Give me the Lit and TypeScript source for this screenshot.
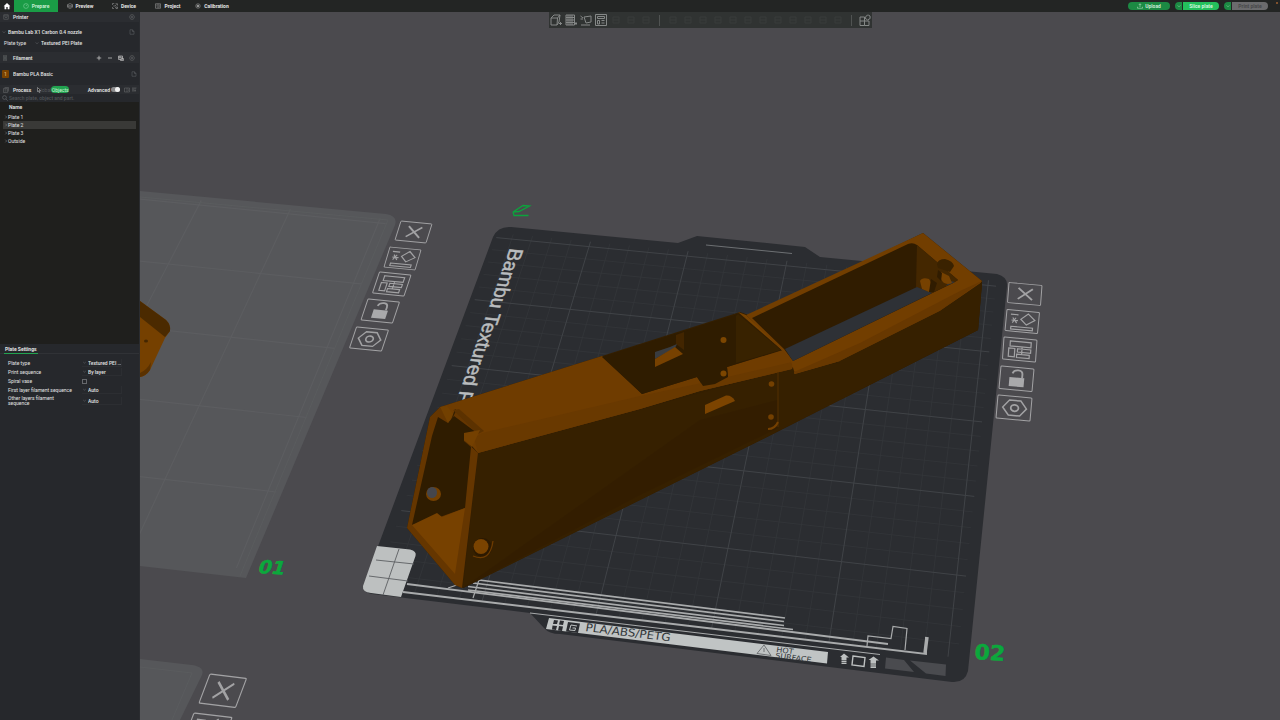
import { LitElement, html, svg, css } from "lit";
import { customElement, property, state } from "lit/decorators.js";

type Pt = [number, number];

/* ---------- plate grid projection ---------- */

const PLATE_MM = 256;

/** Perspective map from bed millimetres (origin bottom left) to the scene. */
function projector(bl: Pt, br: Pt, tr: Pt, tl: Pt) {
  const sx = bl[0] - br[0] + tr[0] - tl[0];
  const sy = bl[1] - br[1] + tr[1] - tl[1];
  const dx1 = br[0] - tr[0], dx2 = tl[0] - tr[0];
  const dy1 = br[1] - tr[1], dy2 = tl[1] - tr[1];
  const den = dx1 * dy2 - dx2 * dy1;
  const g = (sx * dy2 - dx2 * sy) / den;
  const h = (dx1 * sy - sx * dy1) / den;
  const a = br[0] - bl[0] + g * br[0], b = tl[0] - bl[0] + h * tl[0];
  const d = br[1] - bl[1] + g * br[1], e = tl[1] - bl[1] + h * tl[1];
  return (x: number, y: number): Pt => {
    const u = x / PLATE_MM, v = y / PLATE_MM, w = g * u + h * v + 1;
    return [(a * u + b * v + bl[0]) / w, (d * u + e * v + bl[1]) / w];
  };
}

function gridPaths(p: (x: number, y: number) => Pt) {
  let thin = "", bold = "";
  const seg = (a: Pt, b: Pt) =>
    `M${a[0].toFixed(1)} ${a[1].toFixed(1)}L${b[0].toFixed(1)} ${b[1].toFixed(1)}`;
  for (let i = 10; i <= 250; i += 10) {
    const s = seg(p(i, 2), p(i, 254)) + seg(p(2, i), p(254, i));
    if (i % 50 === 0) bold += s;
    else thin += s;
  }
  return { thin, bold };
}

const activeGrid = gridPaths(projector([369, 590], [962, 662], [1001, 279], [495, 230]));
const fadedGrid = gridPaths(projector([-290, 510], [248, 573], [392, 217], [-60, 172]));

/* ---------- plate side buttons ---------- */

const glyphs = {
  close: svg`<path d="M9 4.500L22 15.500M22 4.500L9 15.500" stroke-width="1.700"/>`,
  orient: svg`<path d="M20 2.500L26.500 8L19 13L13.500 8ZM5 15.500H25V18H5ZM4 4H11M6 7L10 12M9 7L6 12M5 9.500H11" stroke-width="1.100"/>`,
  arrange: svg`<path d="M6 3H25V7.500H6ZM5 9.500H10.500V17H5ZM13 9.500H25V12.500H13ZM12.500 14.500H24V17.500H12.500ZM17 7.500V14.500" stroke-width="1.100"/>`,
  lock: svg`<path d="M8.500 9H22V17H8.500Z" fill="#a9a9ab" stroke="none"/><path d="M11 5.500Q12 2.500 16 2.500T20 6V9" stroke-width="1.700"/>`,
  settings: svg`<path d="M10.500 3.500H20.500L26 10L20.500 16.500H10.500L5 10Z" stroke-width="1.300"/><ellipse cx="15.500" cy="10" rx="3.400" ry="2.800" stroke-width="1.500"/>`,
};
type Glyph = keyof typeof glyphs;

function plateButton(kind: Glyph, o: Pt, u: Pt, v: Pt) {
  const m = [u[0] / 30, u[1] / 30, v[0] / 20, v[1] / 20, o[0], o[1]].map((n) => n.toFixed(3));
  return svg`<g transform="matrix(${m.join(" ")})" fill="none" stroke="#a2a2a4" stroke-width="0.9">
    <rect x="0" y="0" width="30" height="20" rx="0.8"/>${glyphs[kind]}</g>`;
}

const plateButtons: [Glyph, Pt, Pt, Pt][] = [
  ["close", [401, 221], [31, 3], [-6, 19]],
  ["orient", [390, 247], [31, 3], [-6, 20]],
  ["arrange", [379.500, 272], [31.500, 3], [-7, 21]],
  ["lock", [368, 299], [31.500, 3], [-7, 21]],
  ["settings", [356.500, 327], [32, 3], [-7, 21]],
  ["close", [1009, 282.500], [33, 3], [-1.500, 20]],
  ["orient", [1007, 309.500], [32.500, 3], [-2, 21]],
  ["arrange", [1004, 337], [33, 3], [-1.500, 22]],
  ["lock", [1001, 366], [33, 3], [-2, 22.500]],
  ["settings", [998, 395], [34, 3], [-2, 23]],
  ["close", [210, 674], [36.500, 4.500], [-11, 29]],
  ["orient", [194, 713], [38, 4.500], [-11, 29]],
];

@customElement("plate-scene")
export class PlateScene extends LitElement {
  static styles = css`
    :host { display: block; min-width: 0; min-height: 0; overflow: hidden; background: #4b4a4e; }
    .view { display: block; width: 100%; height: 100%; }
    .label { font-family: "Liberation Sans", sans-serif; font-size: 20px; fill: #babdbf; stroke: #babdbf; stroke-width: 0.5px; }
    .strip { font-family: "DejaVu Sans", sans-serif; font-size: 12px; fill: #33373a; }
    .warn { font-family: "DejaVu Sans", sans-serif; font-size: 8px; fill: #33373a; }
    .number { font-family: "DejaVu Sans", sans-serif; font-weight: 700; fill: #0ba83c; stroke: #0ba83c; stroke-width: 0.5px; }
    .small { font-size: 19px; }
    .large { font-size: 22px; }
  `;

  render() {
    return html`<svg class="view" viewBox="140 12 1140 708" preserveAspectRatio="xMinYMin slice" role="img" aria-label="Build plates">
      ${this.fadedPlates()} ${this.activePlate()} ${this.model()}
      ${plateButtons.map(([k, o, u, v]) => plateButton(k, o, u, v))}
      <path d="M513 212L523 205.500L529.500 206L519 211.500Z M513 212L514 215.500H528.500" fill="none" stroke="#0ca33d" stroke-width="1.300"/>
      <text class="number small" transform="matrix(1 0.060 -0.300 0.950 257 573)">01</text>
      <text class="number large" transform="matrix(1 0.060 -0.080 0.950 974 659)">02</text>
    </svg>`;
  }

  private fadedPlates() {
    return svg`
      <clipPath id="faded"><path d="M140 191L386 214Q398 216 395 225L246 578L140 566Z"/></clipPath>
      <path d="M140 191L386 214Q398 216 395 225L246 578L140 566Z" fill="#56575a"/>
      <g clip-path="url(#faded)">
        <path d=${fadedGrid.bold} fill="none" stroke="#5c5d60" stroke-width="1.200"/>
        <path d="M140 197L388 220L240 576" fill="none" stroke="#5a5c5e" stroke-width="1"/>
      </g>
      <path d="M140 659L192 665Q205 667 202 675L180 720H140Z" fill="#56575a"/>
      <path d="M140 667L192 673L172 720" fill="none" stroke="#5a5c5e"/>
      <path d="M140 301L166 320Q171 325 170 331L165 338L150 370Q146 376 140 377Z" fill="#754000"/>
      <path d="M140 301L166 320Q171 325 170 331L165 337L140 317Z" fill="#4b2a00"/>
      <ellipse cx="146" cy="341" rx="2" ry="1.500" fill="#442600"/>
      <path d="M151 362L150 370Q146 376 140 377V373Q147 370 151 362Z" fill="#5a3100"/>`;
  }

  private activePlate() {
    const outline =
      "M511 227L678 243L697 236L805 247L820 257L997 274Q1008 277 1007 286L968 671Q965 683 952 682L560 634Q549 634 544 628L530 613L372 594Q361 592 364 584L493 237Q498 226 511 227Z";
    return svg`
      <path d=${outline} fill="#2b2d31"/>
      <path d=${activeGrid.thin} fill="none" stroke="#33363a" stroke-width="0.800"/>
      <path d=${activeGrid.bold} fill="none" stroke="#404347" stroke-width="1"/>
      <path d="M706 245L792 253.500" stroke="#6d7073" stroke-width="1"/>
      <text class="label" transform="matrix(-0.330 0.944 -0.996 -0.090 510 248)">Bambu Textured PEI</text>
      <path d="M377 546L410 549.500Q417 551 415.500 556L401 597L371 593Q362 592 363 586Z" fill="#bdc0c0"/>
      <path d="M399 549L383 595M376 560L414 564M369 576L408 581" stroke="#5c5f62" stroke-width="0.900" fill="none"/>
      <g fill="none" stroke="#a9abac" stroke-width="1.700">
        <path d="M479 580L785 618M473 583L784 621.500M468 586.500L784 625.500M468 590L793 629.500"/>
        <path d="M407 584L888 644M403 592L926 654V637" stroke-width="1.900"/>
        <path d="M448 588L460 584M479 580L473 598" stroke-width="1.200"/>
        <path d="M867 646L868 636L891 638.500L893 626.500L907 628.500L905 650" stroke-width="1.200"/>
        <path d="M925 653L927 637" stroke-width="3.500"/>
        <path d="M530 613L880 654.500" stroke-width="1"/>
      </g>
      <path d="M549 618L828 652L827 663.500L546 629Z" fill="#c0c4c4"/>
      <path d="M554 620L558 620.500L557 624H553ZM560 620.500L564 621L563 625L559 624.500ZM552.500 625.500L557 626L556 630L552 629.500ZM559 626L563 626.500L562 631L558 630.500Z" fill="#2b2d31"/>
      <path d="M568 622L580 623.500L578 633L566 631.500Z" fill="#2b2d31"/>
      <path d="M577 626L571 625L569.500 630L575 630.500L575.500 628H572.500" stroke="#c0c4c4" fill="none"/>
      <text class="strip" transform="matrix(0.993 0.120 -0.150 0.900 585 631)">PLA/ABS/PETG</text>
      <path d="M764 645L757 653.500L771 655.500ZM764 648V652" fill="none" stroke="#5a5d60" stroke-width="0.800"/>
      <text class="warn" transform="matrix(0.993 0.120 -0.150 0.900 776 652)">HOT</text>
      <text class="warn" transform="matrix(0.993 0.120 -0.150 0.900 775 658)">SURFACE</text>
      <path d="M844 653.500L849 657.500H846.500V664H841.500V657H840ZM873.500 656.500L879 660.500H876V668H870.500V660H868.500Z" fill="#bdc0c0"/>
      <path d="M841 660.500H847M841 662.500H847M870 664H877M870 666H877" stroke="#2b2d31" stroke-width="0.600"/>
      <path d="M853 656L865 657.500L864 666.500L852 665Z" fill="none" stroke="#bdc0c0" stroke-width="1.400"/>
      <path d="M886 657.500L904 660L914 672L885 668.500ZM910 660.500L946 664.500L945.500 676L926 673.500Z" fill="#4a4b4f"/>`;
  }

  private model() {
    return svg`
      <path d="M440 407L602 356L740 312L752 316L923 233L982 281L978 330L767 437L660 490L463 588L455 585L407 528L430 417Z" fill="#341f00"/>
      <path d="M478 453L700 393L792 368L840 363L982 284L978 330L767 437L463 588Z" fill="#362000"/>
      <path d="M700 420L778 400V428L640 495L463 588Z" fill="#321d00" opacity="0.600"/>

      <path d="M440 407L602 356L642 394L697 377L703 386L715 384L728 378L727 367L783 350L795 362L792 369L700 391L640 409L478 453L472 446L463 440L464 433L480 432L455 409L450 423Z" fill="#6f3c00"/>
      <path d="M478 453L474 438L482 433L640 396L697 384L792 362V369L700 391L640 409Z" fill="#693900"/>

      <path d="M602 357L738 314L781 350L727 367L728 377L715 384L703 386L697 377L642 394Z" fill="#2f1c00"/>
      <path d="M738 314L781 350L736 363V316Z" fill="#382200"/>
      <path d="M738 312L746 315L796 361L783 351Z" fill="#774200"/>
      <path d="M676 335L684 332V350L676 344Z" fill="#422500"/>
      <path d="M655 352L670 347L677 344L675 348L655 359Z" fill="#393c40"/>
      <path d="M655 359L675 347L683 354L655 367Z" fill="#774100"/>
      <path d="M705 405L726 395.500Q732 395 735 401L705 414Z" fill="#7c4400"/>
      <circle cx="723.500" cy="340" r="3" fill="#7c4600"/>
      <circle cx="723.500" cy="373.500" r="3" fill="#7c4600"/>

      <path d="M746 315L923 233L982 281L980 284L940 311L840 361L795 374L790 358Z" fill="#723e00"/>
      <path d="M982 281L962 290L860 343L794 372V374L840 361L940 311Z" fill="#683800"/>
      <path d="M982 282L978 330L840 400V361L940 311Z" fill="#362000"/>
      <path d="M752 318L908 244Q913 242 917 245L958 280L953 283L793 361L784 349Z" fill="#301c00"/>
      <path d="M917 245L958 280L953 283L932 293L916 287Z" fill="#442700"/>
      <path d="M785 349L917 287L932 293L793 361Z" fill="#2e3136"/>
      <path d="M946 286L950 281L955 282Z" fill="#33363b"/>
      <path d="M937 264Q938 259 945 259Q953 261 954 266L950 272L938 268Z" fill="#3a2200"/>
      <path d="M920 281Q922 277 929 279L932 284L929 292L922 289ZM941 272L949 276L952 283Q944 286 941 279Z" fill="#764100"/>
      <path d="M931 279L937 283L934 292L929 292ZM938 270L942 273L941 281L937 277Z" fill="#301c00"/>

      <path d="M778 372V427" stroke="#4f2d00" stroke-width="1.200"/>
      <circle cx="771.500" cy="384" r="2.800" fill="#744000"/>
      <circle cx="771" cy="417" r="2.800" fill="#744000"/>
      <path d="M768 429Q775 429 778 422" fill="none" stroke="#744000" stroke-width="2"/>

      <path d="M440 407L450 423L456 411L480 432L464 433V440L478 453L462 588L455 585L407 528L430 417Z" fill="#653600"/>
      <path d="M438 417L448 423L454 416L477 433H464V441L471 447L465 508L440 517L412 525L432 436Z" fill="#2f1c00"/>
      <path d="M412 525L437 513L442 517L465 508L455 574Z" fill="#774100"/>
      <path d="M453 410L459 409L484 431L478 434Z" fill="#5c3200"/>
      <path d="M464 433L480 430L472 447L464 440Z" fill="#744000"/>
      <path d="M440 407L447 406L453 414L448 423Z" fill="#724000"/>
      <ellipse cx="433.500" cy="494" rx="7.500" ry="7" fill="#744000"/>
      <ellipse cx="432" cy="492.500" rx="5" ry="5.500" fill="#45464c"/>
      <circle cx="482.500" cy="547.500" r="9.500" fill="#2c1900"/>
      <path d="M473 556Q490 563 493 541" fill="none" stroke="#6d3b00" stroke-width="1.300"/>
      <circle cx="481" cy="546.500" r="7.500" fill="#7a4300"/>`;
  }
}

/* ---------- small line icons ---------- */

const shapes: Record<string, unknown> = {
  home: svg`<path d="M1 6.500L6 1.500L11 6.500H9.700V11H7V7.500H5V11H2.300V6.500Z" fill="currentColor" stroke="none"/>`,
  gauge: svg`<circle cx="6" cy="6" r="4.800"/><path d="M6 6L8 3.500M3.500 3.500L4 4"/>`,
  layers: svg`<path d="M6 1L11 3.500V8.500L6 11L1 8.500V3.500ZM1 3.500L6 6L11 3.500M1 6L6 8.500L11 6"/>`,
  device: svg`<path d="M1 4V1H4.500M7 1.500H11V5M1 8V11H4M7 8H11V11H8ZM2.500 6H6L9 3"/>`,
  project: svg`<path d="M1 1.500H11V10.500H1ZM6 1.500V10.500M3 4H4.500M3 6H4.500M7.500 4H9.500M7.500 6H9.500M7.500 8H9.500"/>`,
  target: svg`<circle cx="6" cy="6" r="4.500"/><circle cx="6" cy="6" r="2" fill="currentColor"/>`,
  upload: svg`<path d="M6 8V1.500M3.500 4L6 1.500L8.500 4M1 7.500V10.500H11V7.500"/>`,
  minus: svg`<path d="M2 6H10" stroke-width="1.500"/>`,
  plus: svg`<path d="M1.500 6H10.500M6 1.500V10.500" stroke-width="1.500"/>`,
  down: svg`<path d="M3 5L6 7.500L9 5"/>`,
  right: svg`<path d="M4 2L8 6L4 10" stroke-width="1.500"/>`,
  gear: svg`<path d="M3.500 1.500H8.500L11 6L8.500 10.500H3.500L1 6Z"/><circle cx="6" cy="6" r="1.700"/>`,
  printer: svg`<path d="M1.500 1.500H10.500V10.500H1.500ZM1.500 4H10.500M4 7H8"/>`,
  spool: svg`<path d="M2 1.500H10M2 10.500H10M3.500 1.500V10.500M8.500 1.500V10.500M3.500 4H8.500M3.500 6H8.500M3.500 8H8.500"/>`,
  edit: svg`<path d="M7 1.500H2V10.500H10V5M7 1.500L10 5H7Z"/>`,
  sync: svg`<path d="M1 2H9V9H1ZM1 4.500H9M4 2V9M6 7H11V11H5V9" stroke-width="1.300"/>`,
  process: svg`<path d="M1 3H9V11H1ZM3 1H11V9M3 5.500H7M3 8H7"/>`,
  compare: svg`<path d="M1 2H11V10H1ZM6 2V10M8 4.500H9.500M8 7H9.500"/>`,
  tune: svg`<path d="M2 2H11M4 2V10M8 2V10M2 6H6M6.500 7H10"/>`,
  search: svg`<circle cx="5" cy="5" r="3.800"/><path d="M8 8L11.500 11.500"/>`,
  cube: svg`<path d="M1 4L4 1H10L9 8L7 11H1ZM1 4H7.500L10 1M7.500 4L7 11M9 9.500H12M10.500 8V11"/>`,
  plate: svg`<path d="M1 1H9.500V11H1ZM3 1V11M5 1V11M7 1V11M1 3.500H9M1 6H9M1 8.500H9M10 9.500H12M11 8V11"/>`,
  orient: svg`<path d="M4 3L11 2V8L6 9ZM1 11H10M0.500 2L3 4M0.500 5H3"/>`,
  arrange: svg`<path d="M0.500 0.500H11.500V11.500H0.500ZM2.500 2.500H9.500V4.500H2.500ZM2.500 6.500H4.500V10H2.500ZM6.500 6.500H9.500M6.500 9H9.500"/>`,
  faint: svg`<path d="M3 3H9V9H3ZM3 6H9"/>`,
  assembly: svg`<path d="M1 3H5.500V11.500H1ZM5.500 7H10V11.500H5.500M1 7H5.500M6 4Q8 -0.500 11 2Q12.500 5 8.500 6Z"/>`,
};

@customElement("line-icon")
export class LineIcon extends LitElement {
  @property() name = "";
  static styles = css`
    :host { display: inline-block; flex: none; width: 6px; height: 6px; }
    .glyph { display: block; width: 100%; height: 100%; fill: none; stroke: currentColor; }
  `;
  render() {
    return html`<svg class="glyph" viewBox="0 0 12 12" aria-hidden="true">${shapes[this.name]}</svg>`;
  }
}

/* ---------- application shell ---------- */

const tabs: [string, string][] = [
  ["Prepare", "gauge"],
  ["Preview", "layers"],
  ["Device", "device"],
  ["Project", "project"],
  ["Calibration", "target"],
];

const plates = ["Plate 1", "Plate 2", "Plate 3", "Outside"];

@customElement("app-root")
export class AppRoot extends LitElement {
  @state() private tab = "Prepare";
  @state() private plate = "Plate 2";

  static styles = css`
    :host {
      display: grid; grid-template: 12px minmax(0, 1fr) / 140px minmax(0, 1fr);
      height: 100vh; overflow: hidden; background: #4b4a4e; color: #e4e4e4;
      font-family: Roboto, "Liberation Sans", sans-serif; font-size: 5px; font-weight: 500; line-height: 6px;
    }
    * { box-sizing: border-box; }
    button, input, select {
      appearance: none; margin: 0; padding: 0; border: 0; border-radius: 0; background: none;
      color: inherit; font: inherit; line-height: inherit; outline: none;
    }
    button { display: inline-flex; align-items: center; justify-content: center; }
    .bar { grid-column: 1 / -1; display: flex; align-items: stretch; background: #232524; }
    .home { width: 14px; color: #fff; }
    .home line-icon { width: 8px; height: 8px; }
    .tab { width: 44px; gap: 3px; font-weight: 700; }
    .tab line-icon { color: #a8a8a8; }
    .tab.on { background: #1a9c46; color: #c8eed5; }
    .tab.on line-icon { color: #8fd8a8; }
    .actions { display: flex; align-items: center; gap: 5px; margin-left: auto; padding-right: 2px; }
    .pill { height: 8px; border-radius: 4px; background: #1c8a43; color: #c9e8d3; font-weight: 700; }
    .upload { width: 42px; gap: 2px; }
    .split { display: flex; gap: 1px; height: 8px; }
    .drop { width: 7px; border-radius: 4px 0 0 4px; background: #1c8a43; color: #8fd0a6; }
    .go { width: 36px; border-radius: 0 4px 4px 0; background: #24c05c; color: #d0f5dd; font-weight: 700; }
    .go.off { background: #6b6b6d; color: #48484a; }
    .dot { width: 2px; height: 2px; margin: 0 0 6px 3px; border-radius: 1px; background: #a06030; }

    .side { display: flex; flex-direction: column; min-height: 0; background: #26282c; border-right: 1px solid #2a2c30; }
    .head { display: flex; align-items: center; gap: 4px; height: 10px; padding: 0 4px 0 3px; font-weight: 600; background: #2b2d31; }
    .head line-icon { color: #6e7073; }
    .head .name { margin-right: auto; }
    .head .bright { color: #c8c8c8; }
    .head.filament { height: 11px; margin-top: 4px; gap: 5px; padding-left: 2px; }
    .head.process { height: 9px; margin-top: 5px; gap: 1px; padding-right: 2px; }
    .row { display: flex; align-items: center; height: 11px; padding: 0 4px 0 1px; gap: 1px; }
    .row line-icon { color: #626468; }
    .row select { flex: 1; min-width: 0; }
    .printer-row { margin-top: 4px; }
    .type-row { padding-left: 4px; }
    .type-row .caption { width: 29px; font-weight: 400; }
    .filament-row { height: 12px; margin-top: 5px; padding: 0 2px; gap: 4px; }
    .swatch { width: 7px; height: 8px; border-radius: 1px; background: #7a4300; color: #e0b070; }
    .seg { display: flex; align-items: center; }
    .seg .global { width: 14px; color: #55585b; font-weight: 400; }
    .seg .objects { width: 18px; height: 7px; border-radius: 4px; background: #22a350; color: #c9f0d6; font-weight: 400; }
    .advanced { display: flex; align-items: center; gap: 1px; margin: 0 2px 0 auto; }
    .advanced + line-icon { margin-left: 1px; }
    .switch { position: relative; width: 9px; height: 5px; border-radius: 3px; background: #8a8b8d; }
    .switch::before { content: ""; position: absolute; right: 0; top: 0; width: 5px; height: 5px; border-radius: 3px; background: #f0f0f0; }
    .process .name { margin-right: 5px; padding-left: 3px; }
    .search { display: flex; align-items: center; gap: 1px; height: 8px; padding: 0 2px; color: #77797c; }
    .search input { flex: 1; min-width: 0; }
    .search input::placeholder { color: #505357; opacity: 1; }
    .objects-list { flex: 1; min-height: 0; margin: 0; padding: 0 3px; background: #1f1f1d; max-height: 242px; }
    .list-head { height: 10px; padding-left: 6px; line-height: 10px; font-weight: 600; }
    .items { display: flex; flex-direction: column; margin: 1px 0 0; padding: 0; list-style: none; }
    .item { justify-content: flex-start; width: 100%; height: 8px; padding-left: 1px; font-weight: 400; }
    .item line-icon { width: 4px; height: 4px; color: #909090; }
    .item.on { background: #393937; }
    .settings { border-top: 1px solid #26282c; }
    .settings-tabs { display: flex; height: 9px; padding-left: 4px; border-bottom: 1px solid #303236; }
    .settings-tabs button { height: 9px; padding: 0 1px; border-bottom: 1px solid #22a350; font-weight: 700; }
    .form { display: grid; grid-template-columns: 74px 40px; align-items: center; row-gap: 1px; padding: 5px 0 0 8px; }
    .form label { display: flex; align-items: center; min-height: 8px; font-weight: 400; }
    .form .field { display: flex; align-items: center; min-height: 8px; gap: 1px; border: 1px solid #2c2e32; border-width: 0 1px 1px 0; }
    .form .field line-icon { width: 5px; height: 5px; color: #7a7c80; }
    .form select { flex: 1; min-width: 0; }
    .form input { width: 5px; height: 5px; border: 1px solid #66686c; }
    .form .tall { width: 52px; min-height: 12px; line-height: 5px; }

    .stage { display: grid; grid-template: minmax(0, 1fr) / minmax(0, 1fr); }
    .stage > * { grid-area: 1 / 1; }
    .tools {
      z-index: 1; justify-self: center; align-self: start; display: flex; align-items: center;
      gap: 3px; height: 16px; padding: 0 1px; background: #303332; color: #393c3b;
    }
    .tools line-icon { width: 12px; height: 12px; }
    .tools .ready { color: #858887; }
    .tools .rule { width: 1px; height: 11px; margin: 0 4px; background: #505352; }
    .pointer { position: absolute; left: 37px; top: 87px; width: 4px; height: 6px; }
  `;

  render() {
    return html`
      <nav class="bar" aria-label="Main">
        <button class="home" aria-label="Home"><line-icon name="home"></line-icon></button>
        ${tabs.map(
          ([t, i]) => html`<button class="tab ${this.tab === t ? "on" : ""}" @click=${() => (this.tab = t)}>
            <line-icon name=${i}></line-icon>${t}
          </button>`,
        )}
        <div class="actions">
          <button class="pill upload"><line-icon name="upload"></line-icon>Upload</button>
          <div class="split">
            <button class="drop" aria-label="Slice options"><line-icon name="down"></line-icon></button>
            <button class="go">Slice plate</button>
          </div>
          <div class="split">
            <button class="drop" aria-label="Print options"><line-icon name="down"></line-icon></button>
            <button class="go off" disabled>Print plate</button>
          </div>
          <span class="dot"></span>
        </div>
      </nav>
      <aside class="side">
        <div class="head">
          <line-icon name="printer"></line-icon><span class="name">Printer</span><line-icon name="gear"></line-icon>
        </div>
        <div class="row printer-row">
          <line-icon name="down"></line-icon>
          <select aria-label="Printer"><option>Bambu Lab X1 Carbon 0.4 nozzle</option></select>
          <line-icon name="edit"></line-icon>
        </div>
        <div class="row type-row">
          <label class="caption" for="bed">Plate type</label>
          <line-icon name="down"></line-icon>
          <select id="bed"><option>Textured PEI Plate</option></select>
        </div>
        <div class="head filament">
          <line-icon name="spool"></line-icon><span class="name">Filament</span>
          <line-icon class="bright" name="plus"></line-icon>
          <line-icon class="bright" name="minus"></line-icon>
          <line-icon class="bright" name="sync"></line-icon>
          <line-icon name="gear"></line-icon>
        </div>
        <div class="row filament-row">
          <button class="swatch">1</button>
          <select aria-label="Filament"><option>Bambu PLA Basic</option></select>
          <line-icon name="edit"></line-icon>
        </div>
        <div class="head process">
          <line-icon name="process"></line-icon><span class="name">Process</span>
          <div class="seg"><button class="global">Global</button><button class="objects">Objects</button></div>
          <label class="advanced">Advanced<input class="switch" type="checkbox" checked /></label>
          <line-icon name="compare"></line-icon><line-icon name="tune"></line-icon>
        </div>
        <div class="search">
          <line-icon name="search"></line-icon>
          <input type="search" aria-label="Search" placeholder="Search plate, object and part." />
        </div>
        <div class="objects-list">
          <div class="list-head">Name</div>
          <ul class="items">
            ${plates.map(
              (p) => html`<li>
                <button class="item ${this.plate === p ? "on" : ""}" @click=${() => (this.plate = p)}>
                  <line-icon name="right"></line-icon>${p}
                </button>
              </li>`,
            )}
          </ul>
        </div>
        <section class="settings">
          <div class="settings-tabs"><button>Plate Settings</button></div>
          <div class="form">
            <label for="f-type">Plate type</label>
            <span class="field"><line-icon name="down"></line-icon><select id="f-type"><option>Textured PEI ...</option></select></span>
            <label for="f-seq">Print sequence</label>
            <span class="field"><line-icon name="down"></line-icon><select id="f-seq"><option>By layer</option></select></span>
            <label for="f-vase">Spiral vase</label>
            <input id="f-vase" type="checkbox" />
            <label for="f-first">First layer filament sequence</label>
            <span class="field"><line-icon name="down"></line-icon><select id="f-first"><option>Auto</option></select></span>
            <label class="tall" for="f-other">Other layers filament sequence</label>
            <span class="field"><line-icon name="down"></line-icon><select id="f-other"><option>Auto</option></select></span>
          </div>
        </section>
      </aside>
      <main class="stage">
        <plate-scene></plate-scene>
        <div class="tools" role="toolbar" aria-label="Plate tools">
          ${["cube", "plate", "orient", "arrange"].map((n) => html`<line-icon class="ready" name=${n}></line-icon>`)}
          ${[1, 2, 3].map(() => html`<line-icon name="faint"></line-icon>`)}
          <span class="rule"></span>
          ${Array.from({ length: 12 }, () => html`<line-icon name="faint"></line-icon>`)}
          <span class="rule"></span>
          <line-icon class="ready" name="assembly"></line-icon>
        </div>
      </main>
      <svg class="pointer" viewBox="0 0 8 12" aria-hidden="true">
        <path d="M1 1V9L3 7.500L4.500 11L6 10.500L4.500 7H7Z" fill="#111" stroke="#ddd" stroke-width="0.900" />
      </svg>
    `;
  }
}
